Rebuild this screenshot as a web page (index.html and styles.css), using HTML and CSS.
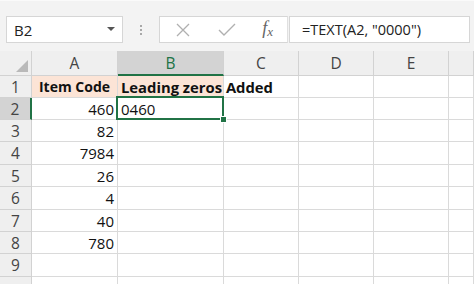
FILE: index.html
```html
<!DOCTYPE html>
<html>
<head>
<meta charset="utf-8">
<link rel="stylesheet" href="styles.css">
</head>
<body>
<div class="toolbar">
  <div class="namebox">
    <span class="name">B2</span>
    <svg class="caret" width="8" height="5" viewBox="0 0 8 5"><path d="M0 0 H8 L4 4 Z" fill="#555"/></svg>
  </div>
  <div class="dots"><i></i><i></i><i></i></div>
  <div class="fbtns">
    <svg class="ico" width="16" height="16" viewBox="0 0 16 16"><path d="M2 2 L14 14 M14 2 L2 14" stroke="#b0b0b0" stroke-width="1.3" fill="none"/></svg>
    <svg class="ico" width="18" height="16" viewBox="0 0 18 16"><path d="M1 8 L6 13 L17 2" stroke="#b0b0b0" stroke-width="1.4" fill="none"/></svg>
    <span class="fx">f<sub>x</sub></span>
  </div>
  <div class="formula">=TEXT(A2, "0000")</div>
</div>
<div class="sheet">
  <div class="h corner"><svg width="12" height="12" viewBox="0 0 12 12"><path d="M12 0 V12 H0 Z" fill="#b9b9b9"/></svg></div>
  <div class="h col">A</div>
  <div class="h col sel">B</div>
  <div class="h col">C</div>
  <div class="h col">D</div>
  <div class="h col">E</div>
  <div class="h col"></div>

  <div class="h row">1</div>
  <div class="c peach b ctr">Item Code</div>
  <div class="c peach b wide">Leading zeros Added</div>
  <div class="c"></div><div class="c"></div><div class="c"></div><div class="c"></div>

  <div class="h row rsel">2</div>
  <div class="c r">460</div>
  <div class="c active">0460</div>
  <div class="c"></div><div class="c"></div><div class="c"></div><div class="c"></div>

  <div class="h row">3</div>
  <div class="c r">82</div>
  <div class="c"></div><div class="c"></div><div class="c"></div><div class="c"></div><div class="c"></div>

  <div class="h row">4</div>
  <div class="c r">7984</div>
  <div class="c"></div><div class="c"></div><div class="c"></div><div class="c"></div><div class="c"></div>

  <div class="h row">5</div>
  <div class="c r">26</div>
  <div class="c"></div><div class="c"></div><div class="c"></div><div class="c"></div><div class="c"></div>

  <div class="h row">6</div>
  <div class="c r">4</div>
  <div class="c"></div><div class="c"></div><div class="c"></div><div class="c"></div><div class="c"></div>

  <div class="h row">7</div>
  <div class="c r">40</div>
  <div class="c"></div><div class="c"></div><div class="c"></div><div class="c"></div><div class="c"></div>

  <div class="h row">8</div>
  <div class="c r">780</div>
  <div class="c"></div><div class="c"></div><div class="c"></div><div class="c"></div><div class="c"></div>

  <div class="h row">9</div>
  <div class="c"></div><div class="c"></div><div class="c"></div><div class="c"></div><div class="c"></div><div class="c"></div>

  <div class="h row"></div>
  <div class="c"></div><div class="c"></div><div class="c"></div><div class="c"></div><div class="c"></div><div class="c"></div>
</div>
</body>
</html>
```
FILE: styles.css
```css
html, body {
  margin: 0;
  padding: 0;
  width: 474px;
  height: 284px;
  overflow: hidden;
  background: #f3f3f3;
  font-family: "Open Sans", "Noto Sans", sans-serif;
}

.toolbar {
  height: 51px;
  box-sizing: border-box;
  padding: 15px 4px 0 6px;
  display: flex;
  align-items: flex-start;
  background: #f3f3f3;
  border-top: 1px solid #fafafa;
}

.namebox, .fbtns, .formula {
  height: 27px;
  box-sizing: border-box;
  background: #fff;
  border: 1px solid #d6d6d6;
  display: flex;
  align-items: center;
}

.namebox {
  width: 117px;
  padding: 0 7px 0 7px;
  justify-content: space-between;
}

.name {
  font-size: 15px;
  color: #222;
}

.dots {
  width: 36px;
  height: 27px;
  display: flex;
  flex-direction: column;
  align-items: center;
  justify-content: center;
  gap: 2px;
}

.dots i {
  display: block;
  width: 2px;
  height: 2px;
  background: #a8a8a8;
}

.fbtns {
  width: 129px;
  padding: 0 14px 0 15px;
  justify-content: space-between;
  border-right: 1px solid #e0e0e0;
}

.fx {
  font-family: "Liberation Serif", "DejaVu Serif", serif;
  font-style: italic;
  font-size: 18px;
  color: #666;
  line-height: 1;
  margin-top: -3px;
}

.fx sub {
  font-size: 13px;
  vertical-align: -2px;
}

.formula {
  margin-left: 1px;
  flex: 1;
  padding-left: 12px;
  font-size: 14.5px;
  color: #222;
}

.sheet {
  display: grid;
  grid-template-columns: 32px 86px 106px 75px 75px 75px 1fr;
  grid-template-rows: 25px 22px 22px 22px 23px 22px 23px 22px 22px 23px 22px;
  background: #fff;
}

.h {
  box-sizing: border-box;
  background: #efefef;
  border-right: 1px solid #d2d2d2;
  border-bottom: 1px solid #d2d2d2;
  color: #444;
  font-size: 15.5px;
  display: flex;
  align-items: center;
  justify-content: center;
}

.corner {
  align-items: flex-end;
  justify-content: flex-end;
  padding: 0 3px 3px 0;
}

.col.sel {
  background: #d3d3d3;
  border-bottom: 2px solid #217346;
  color: #217346;
}

.row.rsel {
  background: #d3d3d3;
  border-right: 2px solid #217346;
}

.c {
  box-sizing: border-box;
  border-right: 1px solid #dadada;
  border-bottom: 1px solid #dadada;
  font-family: "Open Sans", "Noto Sans", sans-serif;
  font-size: 15px;
  color: #111;
  display: flex;
  align-items: center;
  padding: 0 3px;
  white-space: nowrap;
}

.c.r {
  justify-content: flex-end;
}

.c.ctr {
  justify-content: center;
  padding: 0;
  font-size: 14px;
}

.c.b {
  font-weight: bold;
}

.c.wide {
  font-size: 14.8px;
}

.peach {
  background: #fce4d6;
}

.active {
  position: relative;
}

.active::after {
  content: "";
  position: absolute;
  left: -2px;
  top: -2px;
  right: -1px;
  bottom: -1px;
  border: 2px solid #217346;
}

.active::before {
  content: "";
  position: absolute;
  right: -4px;
  bottom: -4px;
  width: 5px;
  height: 5px;
  background: #217346;
  border: 1px solid #fff;
  z-index: 2;
}
```
